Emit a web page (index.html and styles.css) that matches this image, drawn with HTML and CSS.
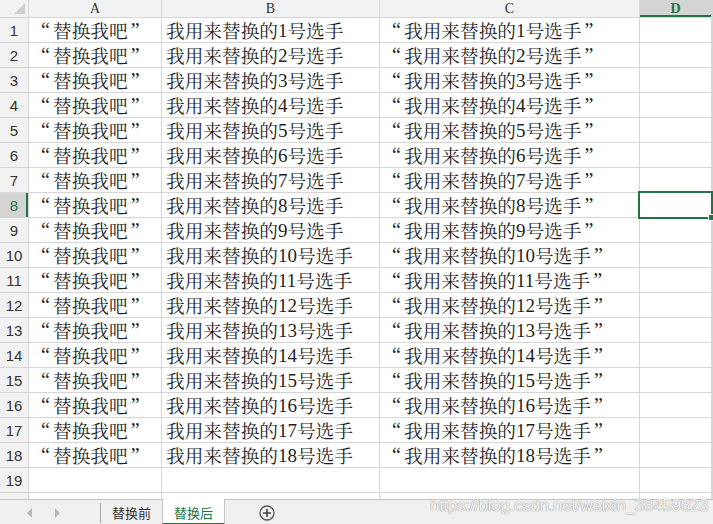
FILE: index.html
```html
<!DOCTYPE html>
<html lang="zh-CN">
<head>
<meta charset="utf-8">
<link rel="stylesheet" href="styles.css">
</head>
<body>
<div class="sheet">
  <div class="grid" id="grid">
    <div class="corner"><span class="tri"></span></div>
    <div class="colh">A</div>
    <div class="colh">B</div>
    <div class="colh">C</div>
    <div class="colh active">D</div>
  </div>
  <div class="tabs">
    <span class="arrow left"></span>
    <span class="arrow right"></span>
    <span class="sep"></span>
    <span class="tab">替换前</span>
    <span class="tab current">替换后</span>
    <svg class="add" width="16" height="16" viewBox="0 0 16 16"><circle cx="8" cy="8" r="7" fill="none" stroke="#555" stroke-width="1.3"/><path d="M8 4v8M4 8h8" stroke="#444" stroke-width="1.6"/></svg>
  </div>
  <div class="watermark">https://blog.csdn.net/weixin_38459823</div>
</div>
<script>
var g = document.getElementById('grid');
var html = '';
var oq = '<span class="q open">“</span>';
var cq = '<span class="q close">”</span>';
for (var i = 1; i <= 19; i++) {
  var act = i === 8 ? ' active' : '';
  html += '<div class="rowh' + act + '">' + i + '</div>';
  if (i <= 18) {
    html += '<div class="cell a">' + oq + '替换我吧' + cq + '</div>';
    html += '<div class="cell">我用来替换的<span class="num">' + i + '</span>号选手</div>';
    html += '<div class="cell">' + oq + '我用来替换的<span class="num">' + i + '</span>号选手' + cq + '</div>';
  } else {
    html += '<div class="cell"></div><div class="cell"></div><div class="cell"></div>';
  }
  html += '<div class="cell' + (i === 8 ? ' sel' : '') + '">' + (i === 8 ? '<span class="handle"></span>' : '') + '</div>';
}
html += '<div class="rowh"></div><div class="cell"></div><div class="cell"></div><div class="cell"></div><div class="cell"></div>';
g.insertAdjacentHTML('beforeend', html);
</script>
</body>
</html>
```
FILE: styles.css
```css
html, body {
  margin: 0;
  padding: 0;
  background: #ffffff;
  overflow: hidden;
}
.sheet {
  position: relative;
  width: 713px;
  height: 524px;
  background: #f0f0f0;
}
.grid {
  display: grid;
  grid-template-columns: 28px 132px 217px 259px 71px;
  grid-template-rows: 17px repeat(19, 24px) 6px;
  gap: 1px;
  padding-right: 1px;
  width: 712px;
  background: #d6d6d6;
  border-bottom: 1px solid #c4c4c4;
}
.corner {
  background: #f2f2f2;
  position: relative;
}
.tri {
  position: absolute;
  right: 3px;
  bottom: 3px;
  width: 0;
  height: 0;
  border-left: 11px solid transparent;
  border-bottom: 11px solid #d0d0d0;
}
.colh {
  background: #f2f2f2;
  font-family: "Liberation Serif", serif;
  font-size: 14px;
  color: #333;
  display: flex;
  align-items: center;
  justify-content: center;
  line-height: 1;
}
.colh.active {
  background: #d4d4d4;
  color: #217346;
  font-weight: bold;
  box-shadow: inset 0 -2px 0 #217346;
}
.rowh {
  background: #f2f2f2;
  font-family: "Liberation Sans", sans-serif;
  font-size: 15px;
  color: #333;
  display: flex;
  align-items: center;
  justify-content: center;
}
.rowh.active {
  background: #d4d4d4;
  color: #217346;
  box-shadow: inset -2px 0 0 #217346;
}
.cell {
  background: #ffffff;
  font-family: "Noto Serif CJK SC", "Noto Sans CJK SC", serif;
  font-size: 18.67px;
  color: #1f1f1f;
  padding-left: 4px;
  white-space: nowrap;
  overflow: visible;
  display: flex;
  align-items: center;
  line-height: 1;
  position: relative;
}
.q {
  display: inline-block;
  box-sizing: border-box;
  font-family: "Liberation Serif", serif;
  font-size: 20px;
}
.q.open {
  width: 20px;
  text-align: right;
  padding-right: 3px;
}
.q.close {
  width: 18px;
  text-align: left;
  padding-left: 3px;
}
.num {
  font-family: "Liberation Serif", serif;
  font-size: 19px;
}
.sel {
  outline: 2px solid #217346;
  outline-offset: 0px;
  z-index: 2;
}
.handle {
  position: absolute;
  right: -4px;
  bottom: -4px;
  width: 5px;
  height: 5px;
  background: #217346;
  border: 1px solid #fff;
}
.tabs {
  display: flex;
  align-items: center;
  height: 25px;
  font-family: "Noto Sans CJK SC", sans-serif;
  font-size: 13px;
  color: #333;
}
.arrow {
  width: 0;
  height: 0;
  border-top: 5px solid transparent;
  border-bottom: 5px solid transparent;
}
.arrow.left {
  margin-left: 27px;
  border-right: 5px solid #b8b8b8;
}
.arrow.right {
  margin-left: 23px;
  border-left: 5px solid #b8b8b8;
}
.sep {
  width: 1px;
  height: 20px;
  background: #a8a8a8;
  margin-left: 40px;
}
.tab {
  height: 25px;
  display: flex;
  align-items: center;
  padding: 0 11px 0 11px;
  box-sizing: border-box;
}
.tab.current {
  background: #ffffff;
  color: #217346;
  border-left: 1px solid #c4c4c4;
  border-right: 1px solid #c4c4c4;
  border-bottom: 2px solid #217346;
  padding-top: 2px;
  margin-top: -1px;
  height: 26px;
}
.add {
  margin-left: 34px;
}
.watermark {
  position: absolute;
  left: 430px;
  top: 496px;
  font-family: "Liberation Sans", sans-serif;
  font-size: 17px;
  color: rgba(255, 255, 255, 0.95);
  text-shadow: 0 0 1px rgba(120, 120, 120, 0.9), 0 0 1px rgba(160, 160, 160, 0.8);
  white-space: nowrap;
  letter-spacing: -0.3px;
}
```
